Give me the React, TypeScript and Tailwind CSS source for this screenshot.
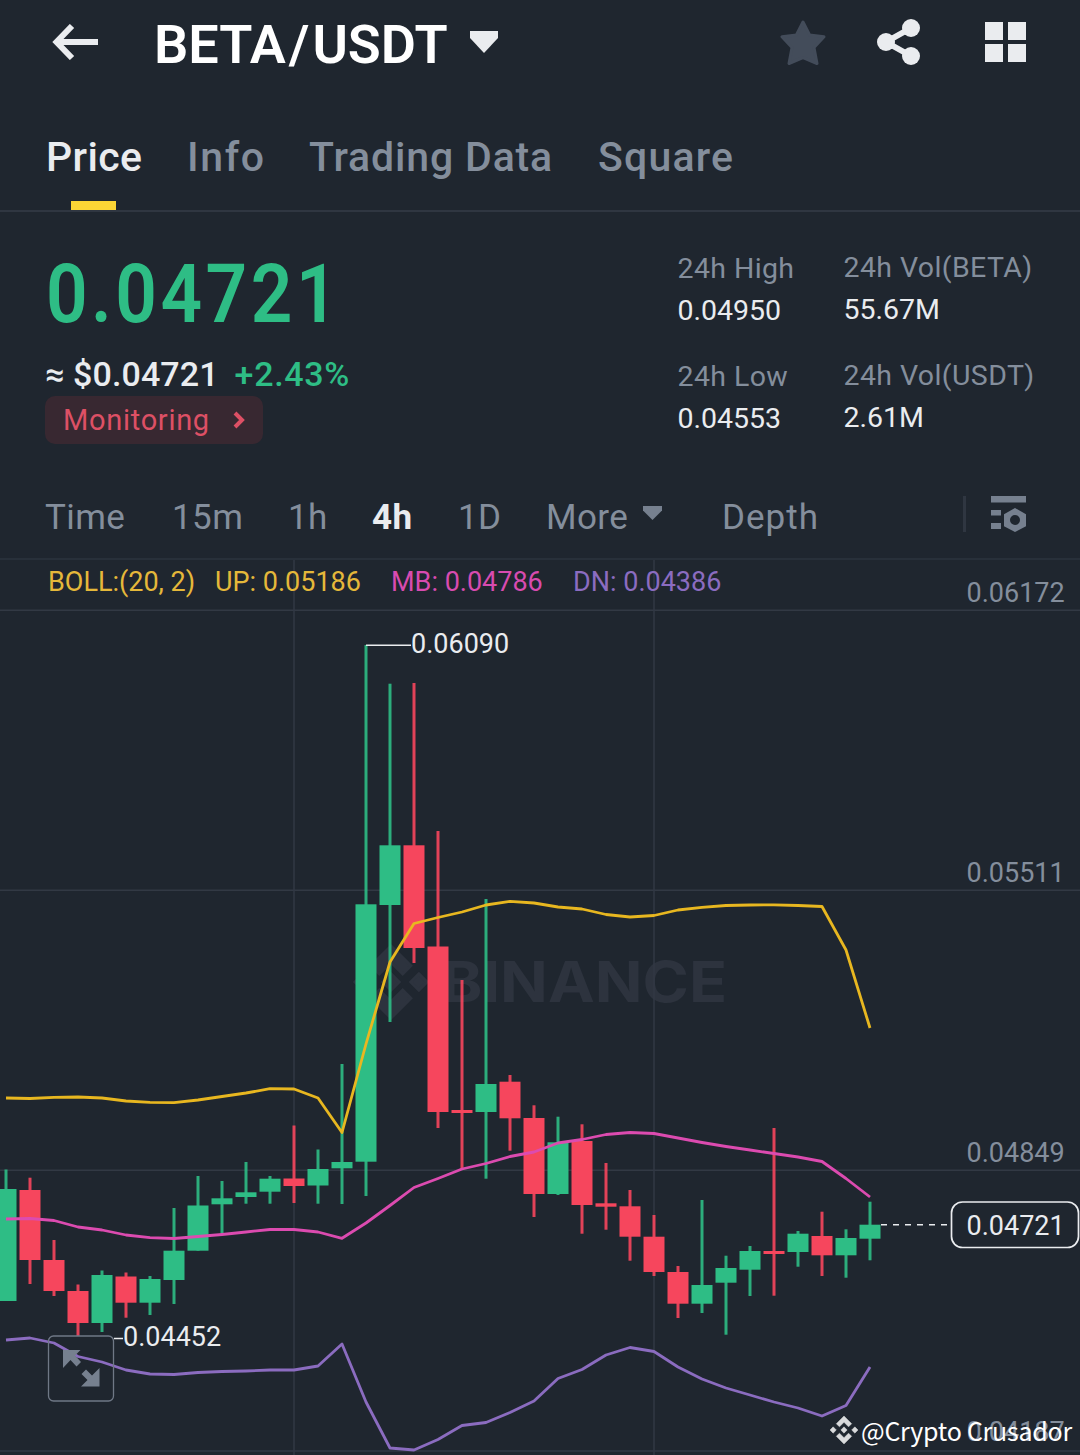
import { clsx } from "clsx";

// y values are chart pixels, the chart starts at y = 560
// [high, body top, body bottom, low, direction]
type Candle = [number, number, number, number, "up" | "down"];

const CANDLES: Candle[] = [
  [1169.5, 1189, 1301, 1301, "up"],
  [1177.7, 1190, 1260, 1284, "down"],
  [1240, 1260, 1291, 1296, "down"],
  [1284.5, 1291, 1323, 1336, "down"],
  [1270.5, 1275, 1323, 1332, "up"],
  [1272.5, 1276.5, 1302.7, 1317.7, "down"],
  [1276, 1279, 1302.7, 1315, "up"],
  [1208, 1250.7, 1280, 1304, "up"],
  [1176, 1205.5, 1250.7, 1250.7, "up"],
  [1181, 1198.3, 1204.3, 1235, "up"],
  [1162, 1192.3, 1197, 1203.7, "up"],
  [1176, 1178.7, 1191.7, 1203.7, "up"],
  [1125.5, 1178.5, 1186, 1203, "down"],
  [1149.5, 1169, 1185.5, 1203.7, "up"],
  [1064, 1162, 1168.3, 1204, "up"],
  [645, 904.3, 1161.7, 1196, "up"],
  [683.7, 845.3, 905, 1022, "up"],
  [683, 845.3, 948, 963, "down"],
  [831, 946.5, 1112, 1128, "down"],
  [980, 1110, 1113, 1169, "down"],
  [899, 1084, 1112, 1178.7, "up"],
  [1075, 1081.7, 1118.3, 1150.7, "down"],
  [1105.3, 1118, 1194, 1217, "down"],
  [1116.7, 1142.3, 1194, 1195, "up"],
  [1124.3, 1141, 1205, 1233.7, "down"],
  [1163, 1203.3, 1206.7, 1229.7, "down"],
  [1190, 1206.3, 1236.7, 1260.7, "down"],
  [1215, 1236.7, 1272, 1276, "down"],
  [1266, 1272, 1303.7, 1318, "down"],
  [1200, 1285, 1303.7, 1313, "up"],
  [1255.7, 1268, 1282.7, 1334.7, "up"],
  [1246, 1251, 1269.7, 1296, "up"],
  [1128, 1251, 1254, 1295.7, "down"],
  [1231, 1233.7, 1252, 1266.7, "up"],
  [1211.7, 1236, 1255.3, 1276, "down"],
  [1229.3, 1238, 1255.3, 1277.7, "up"],
  [1201.7, 1224.7, 1238.7, 1260.3, "up"],
];

const BOLL_UP = [
  1098, 1098.5, 1097.3, 1097, 1098, 1101, 1102.3, 1102.7, 1100, 1096.5, 1093, 1088.7, 1089, 1098, 1132.5, 1044, 962,
  923.5, 917.5, 912, 905, 901.3, 903, 907, 909, 914.5, 917, 915.5, 910, 907.3, 905.5, 905, 904.8, 905.5, 906.5, 950,
  1028,
];
const BOLL_MB = [
  1219, 1218.5, 1220.5, 1227, 1230, 1235, 1237.7, 1238.5, 1236.5, 1234.5, 1232, 1229.5, 1229.5, 1232, 1238.3, 1223,
  1205.5, 1187.5, 1178.5, 1169, 1163.5, 1156.5, 1152, 1143, 1139.5, 1134.5, 1132.5, 1133.5, 1138, 1142.5, 1146.5, 1150,
  1153.5, 1157, 1161.5, 1178.5, 1197,
];
const BOLL_DN = [
  1340, 1338, 1343, 1356.5, 1362, 1370, 1374, 1374.5, 1372.5, 1371.5, 1371, 1370, 1370, 1366, 1344, 1402, 1448, 1450,
  1439.5, 1425.5, 1422.5, 1412.5, 1401, 1378.5, 1369.5, 1355, 1347.5, 1351.5, 1367, 1379, 1388, 1395, 1402, 1408, 1416,
  1405.5, 1367,
];

const AXIS = [
  { y: 602, label: "0.06172" },
  { y: 882, label: "0.05511" },
  { y: 1162, label: "0.04849" },
  { y: 1441, label: "0.04187" },
];

const TABS = [
  { label: "Price", className: "w-[94px] tracking-[0.4px] text-[#eaecef]" },
  { label: "Info", className: "w-[75px] tracking-[1.6px] text-[#848e9c]" },
  { label: "Trading Data", className: "w-[242px] tracking-[0.85px] text-[#848e9c]" },
  { label: "Square", className: "tracking-[1.2px] text-[#848e9c]" },
];

const candleX = (i: number) => 6 + i * 24;
const toPoints = (ys: number[]) => ys.map((y, i) => `${candleX(i)},${y}`).join(" ");

function CaretDown({ className }: { className?: string }) {
  return (
    <svg viewBox="0 0 28 22" preserveAspectRatio="none" className={className} fill="currentColor" aria-hidden>
      <path d="M0 0h28v7L14 22 0 7z" />
    </svg>
  );
}

function BinanceMark() {
  return (
    <>
      <path d="M12 0 L18.6 6.6 L15.9 9.3 L12 5.4 L8.1 9.3 L5.4 6.6z" />
      <path d="M12 24 L18.6 17.4 L15.9 14.7 L12 18.6 L8.1 14.7 L5.4 17.4z" />
      <path d="M2.7 9.3 L5.4 12 L2.7 14.7 L0 12z" />
      <path d="M21.3 9.3 L24 12 L21.3 14.7 L18.6 12z" />
      <path d="M12 9.3 L14.7 12 L12 14.7 L9.3 12z" />
    </>
  );
}

function Header() {
  return (
    <header className="flex h-[84px] items-center pl-[52px] pr-[54px]">
      <svg viewBox="0 0 46 36" className="h-9 w-[46px]" fill="none" stroke="#eaecef" strokeWidth="6" aria-hidden>
        <path d="M46 18H5M20 2 4.5 18 20 34" />
      </svg>
      <h1 className="ml-[56px] mt-[5px] whitespace-nowrap text-[54px] font-semibold leading-none text-white">
        BETA<span className="mx-[3px]">/</span>USDT
      </h1>
      <CaretDown className="ml-[22px] h-[22px] w-7 text-[#eaecef]" />
      <div className="ml-auto flex items-center">
        <svg viewBox="0 0 46 46" className="h-[46px] w-[46px]" fill="#434c5a" stroke="#434c5a" strokeWidth="3" strokeLinejoin="round" aria-hidden>
          <path d="M23 3 29.6 16 44 17.8 34 28.5 37 44.5 23 38.5 9 44.5 12 28.5 2 17.8 16.4 16z" />
        </svg>
        <svg viewBox="0 0 44 46" className="ml-[51px] h-[46px] w-11" fill="#eaecef" stroke="#eaecef" aria-hidden>
          <path d="M34 9 9 23l25 14" fill="none" strokeWidth="6" />
          <circle cx="34" cy="9" r="9" stroke="none" />
          <circle cx="9" cy="23" r="9" stroke="none" />
          <circle cx="34" cy="37" r="9" stroke="none" />
        </svg>
        <div className="ml-[64px] grid grid-cols-2 gap-x-[5px] gap-y-[4px]">
          <span className="h-[18px] w-[18px] bg-[#eaecef]" />
          <span className="h-[18px] w-[18px] bg-[#eaecef]" />
          <span className="h-[18px] w-[18px] bg-[#eaecef]" />
          <span className="h-[18px] w-[18px] bg-[#eaecef]" />
        </div>
      </div>
    </header>
  );
}

function Tabs() {
  return (
    <nav className="flex h-32 gap-[47px] border-b-2 border-[#2f3641] pl-[46px]">
      {TABS.map(({ label, className }, i) => (
        <div key={label} className="flex flex-col items-center justify-between pt-[52px]">
          <span className={clsx("whitespace-nowrap text-[41px] font-medium leading-[42px]", className)}>{label}</span>
          {i === 0 && <span className="h-[9px] w-[45px] bg-[#fcd535]" />}
        </div>
      ))}
    </nav>
  );
}

function Stat({ label, value }: { label: string; value: string }) {
  return (
    <div className="h-[108px] whitespace-nowrap">
      <div className="text-[28.5px] leading-[42px] tracking-[0.4px] text-[#848e9c]">{label}</div>
      <div className="text-[28.5px] leading-[42px] text-[#eaecef]">{value}</div>
    </div>
  );
}

function Ticker() {
  return (
    <section className="flex h-[260px] pl-[45px]">
      <div className="w-[632.5px] pt-[41px]">
        <div className="w-max origin-left scale-x-90 pl-px text-[81px] font-semibold leading-[84px] tracking-[3.9px] text-[#2ebd85]">
          0.04721
        </div>
        <div className="mt-4 flex h-[42px] items-center gap-4 text-[34px] font-medium leading-[42px]">
          <span className="tracking-[0.1px] text-[#eaecef]">≈ $0.04721</span>
          <span className="tracking-[0.7px] text-[#2ebd85]">+2.43%</span>
        </div>
        <div className="mt-px flex h-12 w-[218px] items-center rounded-[10px] bg-[#382831] pl-[18px] text-[#dd5065]">
          <span className="w-[170px] pt-[2px] text-[29px] tracking-[0.7px]">Monitoring</span>
          <svg viewBox="0 0 12 18" className="h-[18px] w-3" fill="none" stroke="currentColor" strokeWidth="4" aria-hidden>
            <path d="m2 2 7 7-7 7" />
          </svg>
        </div>
      </div>
      <div className="w-[166px] pt-[36px]">
        <Stat label="24h High" value="0.04950" />
        <Stat label="24h Low" value="0.04553" />
      </div>
      <div className="pt-[35px]">
        <Stat label="24h Vol(BETA)" value="55.67M" />
        <Stat label="24h Vol(USDT)" value="2.61M" />
      </div>
    </section>
  );
}

function Intervals() {
  return (
    <div className="flex h-[88px] items-center border-b-2 border-[#28303a] pl-[45px] pt-[7px] text-[35px] tracking-[0.4px] text-[#848e9c]">
      <span className="w-[127px]">Time</span>
      <span className="w-[116px]">15m</span>
      <span className="w-[84px]">1h</span>
      <span className="w-[86px] font-bold text-[#eaecef]">4h</span>
      <span className="w-[88px]">1D</span>
      <span className="w-[97px]">More</span>
      <CaretDown className="mb-3 h-[14px] w-[19px] text-[#76808f]" />
      <span className="ml-[60px] tracking-[1px]">Depth</span>
      <div className="ml-auto mr-[53px] flex items-center gap-[25px] pb-[10px]">
        <span className="h-9 w-[3px] bg-[#2f3641]" />
        <svg viewBox="0 0 36 36" className="h-9 w-9" fill="#76808f" aria-hidden>
          <path d="M0 0h35v6.500H0zM0 14h10v5.500H0zM0 27h10v6H0z" />
          <path fillRule="evenodd" d="m24 12 11 6.200v12L24 36l-11-5.800v-12zM24 19a5 5 0 1 0 0 10 5 5 0 0 0 0-10z" />
        </svg>
      </div>
    </div>
  );
}

function Chart() {
  return (
    <div className="relative h-[895px]">
      <svg viewBox="0 560 1080 895" className="block h-[895px] w-[1080px]" fontSize="27">
        <g fill="#2d333e">
          <g transform="translate(355 946) scale(3)" stroke="#2d333e" strokeWidth="1">
            <BinanceMark />
          </g>
          <text
            x="441"
            y="1001.500"
            fontFamily="Inter"
            fontWeight="700"
            fontSize="56"
            textLength="286"
            lengthAdjust="spacingAndGlyphs"
          >
            BINANCE
          </text>
        </g>

        <g stroke="#323944" strokeWidth="1.500">
          {[610.3, 890.3, 1170.3, 1451].map((y) => (
            <path key={y} d={`M0 ${y}H1080`} />
          ))}
          <path d="M294 560V1455M654 560V1455" />
        </g>

        {CANDLES.map(([high, top, bottom, low, dir], i) => (
          <g key={i} fill={dir === "up" ? "#2ebd85" : "#f6465d"}>
            <rect x={candleX(i) - 1.5} y={high} width="3" height={low - high} fillOpacity="0.9" />
            <rect x={candleX(i) - 10.5} y={top} width="21" height={bottom - top} />
          </g>
        ))}

        <g fill="none" strokeWidth="2.800" strokeLinejoin="round">
          <polyline points={toPoints(BOLL_UP)} stroke="#e8b720" />
          <polyline points={toPoints(BOLL_MB)} stroke="#dc4bb0" />
          <polyline points={toPoints(BOLL_DN)} stroke="#8b6cc0" />
        </g>

        <g stroke="#eaecef" strokeWidth="1.500">
          <path d="M366 645.200H411M114 1338.500H123" />
          <path d="M881 1224.700H947" strokeDasharray="6 6" />
        </g>
        <g fill="#eaecef">
          <text x="411" y="652.500">0.06090</text>
          <text x="123" y="1345.500">0.04452</text>
        </g>

        <g fill="#848e9c">
          {AXIS.map(({ y, label }) => (
            <text key={label} x="966.500" y={y}>
              {label}
            </text>
          ))}
        </g>
        <rect x="951.500" y="1202" width="127" height="45.500" rx="11" fill="#1f262f" stroke="#eaecef" strokeWidth="1.700" />
        <text x="966.500" y="1234.700" fill="#eaecef">0.04721</text>

        <rect x="48.500" y="1336" width="65" height="65" rx="5" fill="none" stroke="#6f7886" strokeWidth="1.300" />
        <path
          d="M63 1350h17.500l-5.500 5.500 6 6.500-4.500 4.500-6-6.500-7.500 8zM99.500 1386.500h-18.500l6.500-6.500-6-6 4.500-4.500 6 6 7.500-7.500z"
          fill="#76808f"
        />
      </svg>

      <div className="absolute left-12 top-0 flex h-[45px] items-center whitespace-nowrap text-[27px]">
        <span className="w-[167px] text-[#e5b83a]">BOLL:(20, 2)</span>
        <span className="w-[176px] text-[#e5b83a]">UP: 0.05186</span>
        <span className="w-[182px] text-[#d84bb0]">MB: 0.04786</span>
        <span className="text-[#8b6cc0]">DN: 0.04386</span>
      </div>

      <div className="absolute bottom-[7px] left-[830px] flex items-center gap-[3px] text-white">
        <svg viewBox="0 0 24 24" className="h-7 w-7" fill="#d9dadc" stroke="#d9dadc" strokeWidth="0.4" aria-hidden>
          <BinanceMark />
        </svg>
        <span className="whitespace-nowrap font-['Noto_Sans_CJK_SC',sans-serif] text-[25px] leading-9 tracking-[-0.25px]">
          @Crypto Crusador
        </span>
      </div>
    </div>
  );
}

export default function App() {
  return (
    <div className="h-[1455px] w-[1080px] overflow-hidden bg-[#1f262f] font-[Roboto,sans-serif]">
      <Header />
      <Tabs />
      <Ticker />
      <Intervals />
      <Chart />
    </div>
  );
}
